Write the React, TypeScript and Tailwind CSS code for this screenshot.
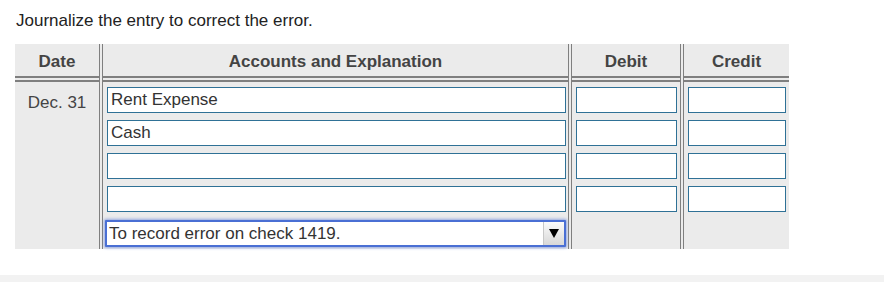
import React from 'react';

// Journal entry correction form: a gray ledger table with four entry rows
// and a dropdown holding the explanation line.

const font = { fontFamily: '"Liberation Sans", Arial, Helvetica, sans-serif' };

const inputCls =
    'h-[26px] w-full border border-[#2f7196] bg-white px-[3px] text-[17px] leading-[24px] text-[#333] outline-none';

function Field({ value = '' }: { value?: string }) {
    return <input readOnly value={value} className={inputCls} style={font} />;
}

function ExplanationSelect() {
    return (
        <div className="flex h-[27px] w-full items-stretch rounded-[1px] border-2 border-[#4a6fd4] bg-white shadow-[0_0_3px_1px_rgba(74,111,212,0.55)]">
            <span className="flex-1 pl-[2px] text-[17px] leading-[23px] text-[#333]">
                To record error on check 1419.
            </span>
            <span className="flex w-[21px] items-center justify-center border-l border-[#c8c8c8] bg-gradient-to-b from-[#fbfbfb] to-[#d8d8d8]">
                <svg width="10" height="9" viewBox="0 0 10 9">
                    <polygon points="0,0 10,0 5,9" fill="#000" />
                </svg>
            </span>
        </div>
    );
}

function HeaderCell({ label }: { label: string }) {
    return (
        <div className="flex h-[38px] items-center justify-center border-b-[6px] border-double border-[#7f7f7f] pt-[4px] text-[17px] font-bold text-[#444]">
            {label}
        </div>
    );
}

export default function App() {
    const rows = ['Rent Expense', 'Cash', '', ''];
    return (
        <div className="relative h-[282px] w-[884px] bg-white" style={font}>
            <p className="pl-[16px] pt-[11px] text-[17px] leading-[20px] text-[#222]">
                Journalize the entry to correct the error.
            </p>

            <div className="ml-[15px] mt-[13px] flex h-[205px] w-[774px] bg-[#ebebeb]">
                {/* Date */}
                <div className="flex w-[84px] flex-col">
                    <HeaderCell label="Date" />
                    <div className="flex h-[31px] items-end justify-center text-[17px] leading-[20px] text-[#444]">
                        Dec. 31
                    </div>
                </div>

                {/* Accounts and Explanation */}
                <div className="flex w-[469px] flex-col border-l-[4px] border-double border-[#7f7f7f]">
                    <HeaderCell label="Accounts and Explanation" />
                    <div className="flex flex-col gap-[7px] pl-[4px] pr-[2px] pt-[5px]">
                        {rows.map((r, i) => (
                            <Field key={i} value={r} />
                        ))}
                        <div className="-ml-[2px] mt-[1px]">
                            <ExplanationSelect />
                        </div>
                    </div>
                </div>

                {/* Debit */}
                <div className="flex w-[112px] flex-col border-l-[4px] border-double border-[#7f7f7f]">
                    <HeaderCell label="Debit" />
                    <div className="flex flex-col gap-[7px] pl-[4px] pr-[3px] pt-[5px]">
                        {rows.map((_, i) => (
                            <Field key={i} />
                        ))}
                    </div>
                </div>

                {/* Credit */}
                <div className="flex w-[109px] flex-col border-l-[4px] border-double border-[#7f7f7f]">
                    <HeaderCell label="Credit" />
                    <div className="flex flex-col gap-[7px] pl-[4px] pr-[3px] pt-[5px]">
                        {rows.map((_, i) => (
                            <Field key={i} />
                        ))}
                    </div>
                </div>
            </div>

            <div className="mt-[26px] h-[7px] w-full bg-[#f2f2f2]" />
        </div>
    );
}
